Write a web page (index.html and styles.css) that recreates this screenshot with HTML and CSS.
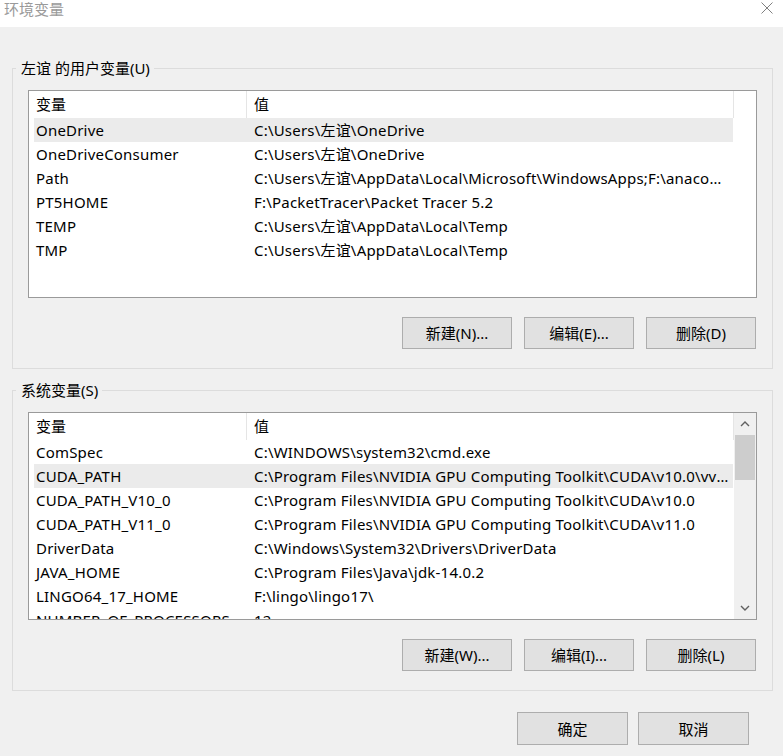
FILE: index.html
```html
<!DOCTYPE html>
<html lang="zh-CN">
<head>
<meta charset="utf-8">
<title>环境变量</title>
<link rel="stylesheet" href="styles.css">
</head>
<body>
<div class="titlebar">
  <span class="title">环境变量</span>
  <svg class="close" width="12" height="12" viewBox="0 0 12 12"><path d="M0.5 0.5L11.5 11.5M11.5 0.5L0.5 11.5" stroke="#808080" stroke-width="1" fill="none"/></svg>
</div>
<div class="content">
  <fieldset class="group">
    <legend>左谊 的用户变量(U)</legend>
    <div class="listview">
      <div class="lv-main">
        <div class="lv-head"><div class="hc hc1">变量</div><div class="hc hc2">值</div></div>
        <div class="lv-row sel"><div class="c1">OneDrive</div><div class="c2">C:\Users\左谊\OneDrive</div></div>
        <div class="lv-row"><div class="c1">OneDriveConsumer</div><div class="c2">C:\Users\左谊\OneDrive</div></div>
        <div class="lv-row"><div class="c1">Path</div><div class="c2">C:\Users\左谊\AppData\Local\Microsoft\WindowsApps;F:\anaconda3;F:\anaconda3\Scripts</div></div>
        <div class="lv-row"><div class="c1">PT5HOME</div><div class="c2">F:\PacketTracer\Packet Tracer 5.2</div></div>
        <div class="lv-row"><div class="c1">TEMP</div><div class="c2">C:\Users\左谊\AppData\Local\Temp</div></div>
        <div class="lv-row"><div class="c1">TMP</div><div class="c2">C:\Users\左谊\AppData\Local\Temp</div></div>
      </div>
      <div class="lv-side"></div>
    </div>
    <div class="btnrow">
      <button class="btn">新建(N)...</button>
      <button class="btn">编辑(E)...</button>
      <button class="btn">删除(D)</button>
    </div>
  </fieldset>

  <fieldset class="group group2">
    <legend>系统变量(S)</legend>
    <div class="listview">
      <div class="lv-main">
        <div class="lv-head"><div class="hc hc1">变量</div><div class="hc hc2">值</div></div>
        <div class="lv-row"><div class="c1">ComSpec</div><div class="c2">C:\WINDOWS\system32\cmd.exe</div></div>
        <div class="lv-row sel"><div class="c1">CUDA_PATH</div><div class="c2">C:\Program Files\NVIDIA GPU Computing Toolkit\CUDA\v10.0\vvvvvvvvvv</div></div>
        <div class="lv-row"><div class="c1">CUDA_PATH_V10_0</div><div class="c2">C:\Program Files\NVIDIA GPU Computing Toolkit\CUDA\v10.0</div></div>
        <div class="lv-row"><div class="c1">CUDA_PATH_V11_0</div><div class="c2">C:\Program Files\NVIDIA GPU Computing Toolkit\CUDA\v11.0</div></div>
        <div class="lv-row"><div class="c1">DriverData</div><div class="c2">C:\Windows\System32\Drivers\DriverData</div></div>
        <div class="lv-row"><div class="c1">JAVA_HOME</div><div class="c2">C:\Program Files\Java\jdk-14.0.2</div></div>
        <div class="lv-row"><div class="c1">LINGO64_17_HOME</div><div class="c2">F:\lingo\lingo17\</div></div>
        <div class="lv-row"><div class="c1">NUMBER_OF_PROCESSORS</div><div class="c2">12</div></div>
      </div>
      <div class="lv-side scrollbar">
        <div class="sb-arrow"><svg width="10" height="6" viewBox="0 0 10 6"><path d="M1 5L5 1L9 5" stroke="#606060" stroke-width="1.4" fill="none"/></svg></div>
        <div class="sb-thumb"></div>
        <div class="sb-space"></div>
        <div class="sb-arrow"><svg width="10" height="6" viewBox="0 0 10 6"><path d="M1 1L5 5L9 1" stroke="#606060" stroke-width="1.4" fill="none"/></svg></div>
      </div>
    </div>
    <div class="btnrow">
      <button class="btn">新建(W)...</button>
      <button class="btn">编辑(I)...</button>
      <button class="btn">删除(L)</button>
    </div>
  </fieldset>

  <div class="dlg-btns">
    <button class="btn btn-dlg">确定</button>
    <button class="btn btn-dlg">取消</button>
  </div>
</div>
</body>
</html>
```

FILE: styles.css
```css
* {
  box-sizing: border-box;
}

html, body {
  margin: 0;
  padding: 0;
}

body {
  width: 783px;
  height: 756px;
  overflow: hidden;
  background: #f0f0f0;
  font-family: "Noto Sans", "Noto Sans CJK SC", sans-serif;
  font-size: 15px;
  color: #000;
}

.titlebar {
  height: 27px;
  background: #fff;
  display: flex;
  justify-content: space-between;
  align-items: flex-start;
  padding: 0 10px 0 4px;
}

.title {
  color: #9a9a9a;
  font-size: 15px;
  line-height: 18px;
}

.close {
  margin-top: 2px;
  display: block;
}

.content {
  padding: 31px 10px 0 12px;
}

.group {
  margin: 0;
  min-width: 0;
  border: 1px solid #dcdcdc;
  padding: 12px 15px 19px 15px;
}

.group2 {
  margin-top: 11px;
}

.group legend {
  padding: 0 4px 0 5px;
  margin-left: -12px;
  line-height: 20px;
  font-size: 15px;
}

.listview {
  height: 208px;
  border: 1px solid #9a9a9a;
  background: #fff;
  display: flex;
  overflow: hidden;
}

.lv-main {
  flex: 0 0 705px;
  overflow: hidden;
}

.lv-side {
  flex: 0 0 22px;
}

.lv-head {
  display: flex;
  height: 27px;
  line-height: 27px;
}

.hc {
  border-right: 1px solid #e5e5e5;
  padding-left: 7px;
  white-space: nowrap;
}

.hc1 {
  width: 218px;
}

.hc2 {
  width: 487px;
}

.lv-row {
  display: flex;
  margin-left: 5px;
  width: 699px;
  height: 24px;
  line-height: 24px;
  letter-spacing: 0.2px;
}

.lv-row.sel {
  background: #ebebeb;
}

.c1 {
  width: 212px;
  flex: 0 0 212px;
  padding-left: 2px;
  padding-right: 4px;
  white-space: nowrap;
  overflow: hidden;
  text-overflow: ellipsis;
}

.c2 {
  flex: 1;
  min-width: 0;
  padding-left: 8px;
  padding-right: 4px;
  white-space: nowrap;
  overflow: hidden;
  text-overflow: ellipsis;
}

.scrollbar {
  background: #f0f0f0;
  display: flex;
  flex-direction: column;
}

.sb-arrow {
  height: 22px;
  display: flex;
  align-items: center;
  justify-content: center;
}

.sb-arrow svg {
  display: block;
}

.sb-thumb {
  height: 45px;
  margin: 0 1px;
  background: #cdcdcd;
}

.sb-space {
  flex: 1;
}

.btnrow {
  display: flex;
  justify-content: flex-end;
  gap: 12px;
  margin-top: 19px;
  padding-right: 1px;
}

.btn {
  width: 110px;
  height: 32px;
  padding: 0;
  background: #e1e1e1;
  border: 1px solid #adadad;
  border-radius: 0;
  font-family: "Noto Sans", "Noto Sans CJK SC", sans-serif;
  font-size: 15px;
  color: #000;
  line-height: 30px;
}

.dlg-btns {
  display: flex;
  justify-content: flex-end;
  gap: 10px;
  margin-top: 21px;
  padding-right: 24px;
}

.btn-dlg {
  width: 111px;
  height: 33px;
}
```
